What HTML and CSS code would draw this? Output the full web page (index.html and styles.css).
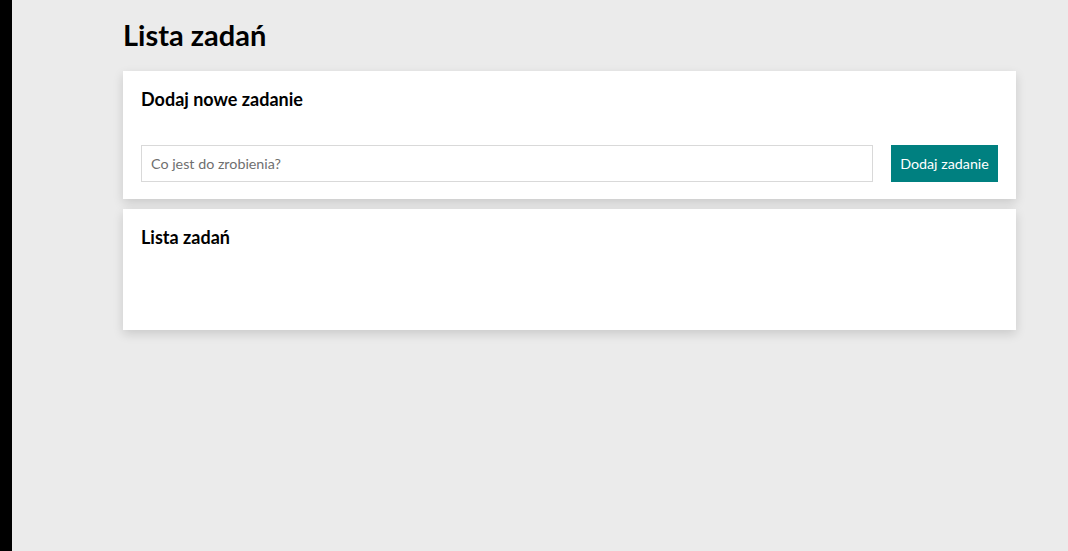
FILE: index.html
```html
<!DOCTYPE html>
<html lang="pl">
<head>
<meta charset="utf-8">
<title>Lista zadań</title>
<link rel="stylesheet" href="styles.css">
</head>
<body>
<div class="layout">
  <aside class="strip"></aside>
  <main class="main">
    <h1 class="title">Lista zadań</h1>
    <section class="card card-add">
      <h2 class="card-title">Dodaj nowe zadanie</h2>
      <form class="add-form">
        <input class="add-input" type="text" placeholder="Co jest do zrobienia?">
        <button class="add-btn" type="button">Dodaj zadanie</button>
      </form>
    </section>
    <section class="card card-list">
      <h2 class="card-title">Lista zadań</h2>
      <ul class="tasks"></ul>
    </section>
  </main>
</div>
</body>
</html>
```

FILE: styles.css
```css
* { box-sizing: border-box; }
html, body { margin: 0; padding: 0; height: 100%; }
body {
  font-family: Lato, "Noto Sans", sans-serif;
  background: #ebebeb;
  color: #000;
}
.layout { display: flex; min-height: 100%; }
.strip { width: 12px; background: #000; flex-shrink: 0; }
.main {
  width: 893px;
  margin-left: 111px;
  padding-top: 18px;
}
.title {
  font-size: 29px;
  font-weight: 700;
  margin: 0 0 19px;
  line-height: 34px;
}
.card {
  background: #fff;
  box-shadow: 0 4px 10px rgba(0,0,0,0.14);
  padding: 17px 18px 17px;
  margin-bottom: 10px;
}
.card-title {
  font-size: 18px;
  font-weight: 700;
  margin: 0;
  line-height: 22px;
}
.add-form {
  display: flex;
  gap: 18px;
  margin-top: 35px;
}
.add-input {
  flex: 1;
  height: 37px;
  border: 1px solid #d9d9d9;
  padding: 0 9px;
  font-family: Lato, sans-serif;
  font-size: 14.3px;
  outline: none;
}
.add-input::placeholder { color: #6f6f6f; }
.add-btn {
  width: 107px;
  height: 37px;
  background: #008080;
  color: #fff;
  border: none;
  font-family: Lato, sans-serif;
  font-size: 14.3px;
  padding: 0;
}
.card-list { height: 121px; }
.tasks { list-style: none; margin: 0; padding: 0; }
```
